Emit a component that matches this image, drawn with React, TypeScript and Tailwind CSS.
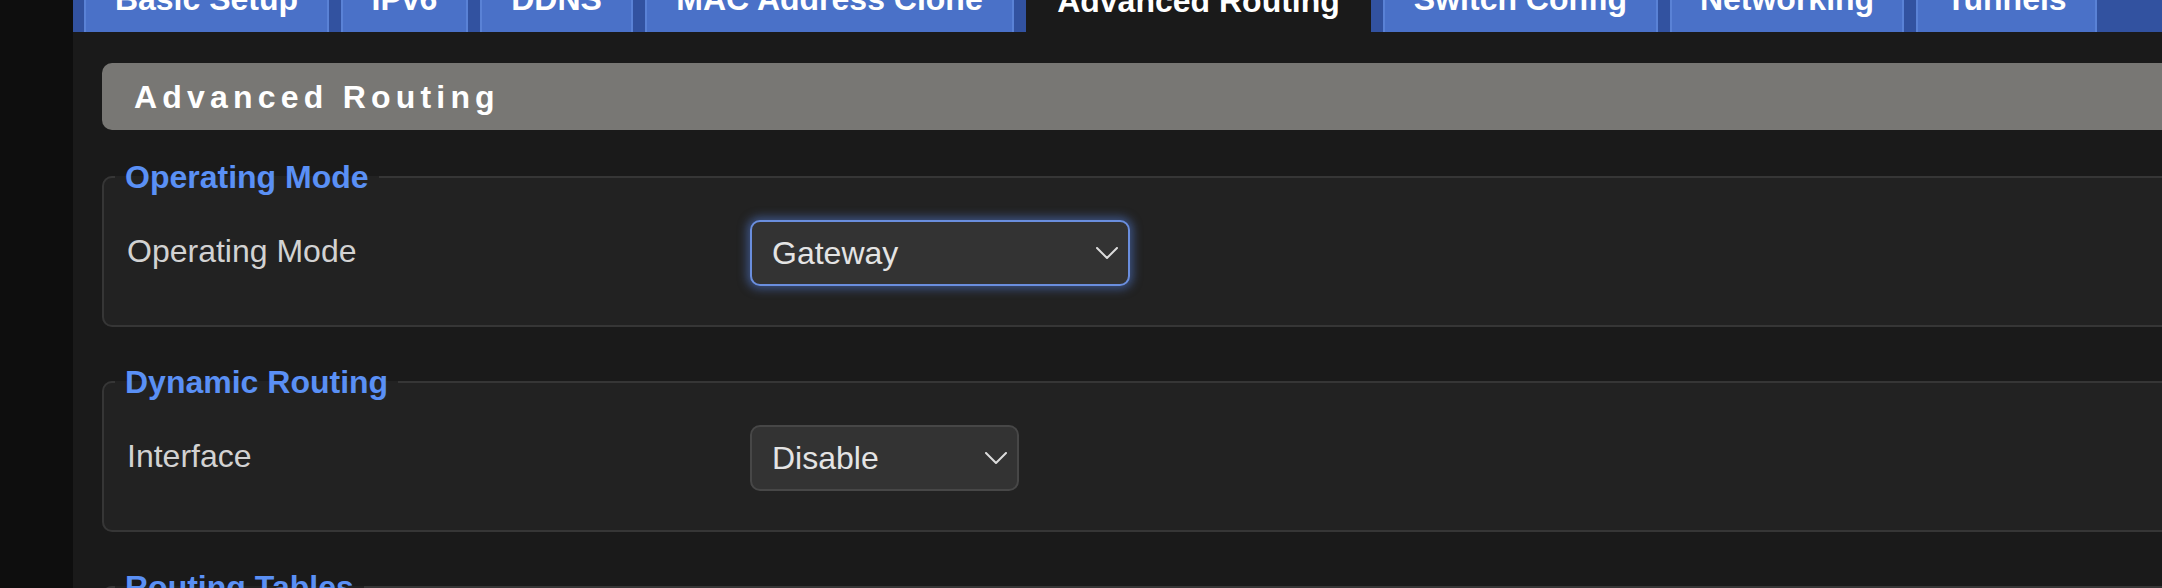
import React from 'react';

const tabs = [
  { label: 'Basic Setup', w: 'w-[245px]' },
  { label: 'IPv6', w: 'w-[127px]' },
  { label: 'DDNS', w: 'w-[153px]' },
  { label: 'MAC Address Clone', w: 'w-[369px]' },
  { label: 'Advanced Routing', w: 'w-[345px]', active: true },
  { label: 'Switch Config', w: 'w-[275px]' },
  { label: 'Networking', w: 'w-[234px]' },
  { label: 'Tunnels', w: 'w-[181px]' },
];

const Chevron: React.FC = () => (
  <svg width="22" height="13" viewBox="0 0 22 13" fill="none" className="shrink-0">
    <polyline points="1,1 11,11 21,1" stroke="#dcdcdc" strokeWidth="2" strokeLinecap="round" strokeLinejoin="round" />
  </svg>
);

interface SelectProps {
  value: string;
  width: string;
  focused?: boolean;
}

const FakeSelect: React.FC<SelectProps> = ({ value, width, focused }) => (
  <div
    className={`${width} h-[66px] rounded-[10px] border-2 bg-[#333333] flex items-center justify-between pl-[20px] pr-[10px] ${
      focused
        ? 'border-[#6a8ede] shadow-[0_0_10px_3px_rgba(86,130,226,0.5)]'
        : 'border-[#474747]'
    }`}
  >
    <span className="text-[32px] leading-[38px] text-[#e4e4e4]">{value}</span>
    <Chevron />
  </div>
);

interface SectionProps {
  title: string;
  children?: React.ReactNode;
}

const Section: React.FC<SectionProps> = ({ title, children }) => (
  <fieldset className="border-2 border-[#363636] rounded-[10px] bg-[#222222] pl-[11px] pr-0 pt-[24px] pb-[39px] mb-[36px]">
    <legend className="px-[10px] text-[32px] leading-[38px] font-bold text-[#5a90f5]">{title}</legend>
    {children}
  </fieldset>
);

const Row: React.FC<{ label: string; children: React.ReactNode }> = ({ label, children }) => (
  <div className="flex items-center pl-[12px]">
    <div className="w-[623px] shrink-0 text-[32px] leading-[38px] text-[#d2d2d2] mb-[5px]">{label}</div>
    {children}
  </div>
);

export default function App() {
  return (
    <div className="w-[2162px] h-[588px] overflow-hidden flex bg-[#1a1a1a]" style={{ fontFamily: '"Liberation Sans", Arial, sans-serif' }}>
      <div className="w-[73px] shrink-0 bg-[#0e0e0e]" />
      <div className="flex-1 min-w-0 flex flex-col">
        <div className="h-[32px] shrink-0 bg-[#3252a0] flex gap-[12px] pl-[11px] overflow-hidden">
          {tabs.map((t) =>
            t.active ? (
              <div key={t.label} className={`${t.w} shrink-0 h-full bg-[#1a1a1a] text-center overflow-hidden`}>
                <span className="block -mt-[15px] text-[32px] leading-[32px] font-bold text-white whitespace-nowrap">{t.label}</span>
              </div>
            ) : (
              <div
                key={t.label}
                className={`${t.w} shrink-0 h-full bg-[#4a71c8] border-x-2 border-[#5a82d6] text-center overflow-hidden`}
              >
                <span className="block -mt-[17px] text-[32px] leading-[32px] font-bold text-white whitespace-nowrap">{t.label}</span>
              </div>
            )
          )}
        </div>
        <div className="w-[2400px] pl-[29px] pt-[31px]">
          <div className="h-[67px] rounded-[10px] bg-[#787774] flex items-center pl-[32px] mb-[28px]">
            <span className="text-[32px] leading-[38px] font-bold text-white tracking-[5.2px]">Advanced Routing</span>
          </div>
          <Section title="Operating Mode">
            <Row label="Operating Mode">
              <FakeSelect value="Gateway" width="w-[380px]" focused />
            </Row>
          </Section>
          <Section title="Dynamic Routing">
            <Row label="Interface">
              <FakeSelect value="Disable" width="w-[269px]" />
            </Row>
          </Section>
          <Section title="Routing Tables">
            <div className="h-[100px]" />
          </Section>
        </div>
      </div>
    </div>
  );
}
